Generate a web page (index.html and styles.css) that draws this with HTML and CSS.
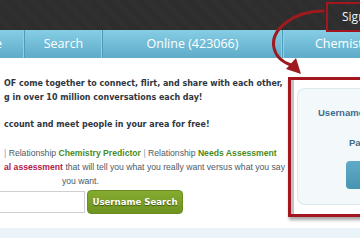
FILE: index.html
```html
<!DOCTYPE html>
<html>
<head>
<meta charset="utf-8">
<link rel="stylesheet" href="styles.css">
</head>
<body>
<div class="page">
  <header class="topbar">
    <div class="signin">Sign In</div>
  </header>
  <nav class="navbar">
    <div class="nav-item first">Home</div>
    <div class="nav-item search">Search</div>
    <div class="nav-item online">Online (423066)</div>
    <div class="nav-item chem">Chemistry</div>
  </nav>
  <main class="main">
    <section class="intro">
      <p class="lead l1">OF come together to connect, flirt, and share with each other,</p>
      <p class="lead l2">g in over 10 million conversations each day!</p>
      <p class="lead l3">ccount and meet people in your area for free!</p>
      <p class="info l4"><span class="pipe">|</span> Relationship <b class="green">Chemistry Predictor</b> <span class="pipe">|</span> Relationship <b class="green">Needs Assessment</b></p>
      <p class="info l5"><b class="crimson">al assessment</b> that will tell you what you really want versus what you say</p>
      <p class="info l6">you want.</p>
      <form class="search-row">
        <input class="search-input" type="text">
        <button class="search-btn" type="button">Username Search</button>
      </form>
    </section>
    <aside class="login-panel">
      <div class="frame">
        <div class="login-box">
          <div class="label user">Username</div>
          <div class="label pass">Password</div>
          <div class="login-btn"></div>
        </div>
      </div>
    </aside>
  </main>
  <footer class="strip"></footer>
  <svg class="arrow" width="360" height="238" viewBox="0 0 360 238">
    <path d="M323,11 C293,11 270,30 274,48 C276,57 282,62 291,65" fill="none" stroke="#9d1a1f" stroke-width="3" stroke-linecap="round"/>
    <polygon points="301,74 286,69 296,58" fill="#9d1a1f"/>
  </svg>
</div>
</body>
</html>
```
FILE: styles.css
```css
html, body {
  margin: 0;
  padding: 0;
}
body {
  width: 360px;
  height: 238px;
  overflow: hidden;
  background: #ffffff;
}
.page {
  position: relative;
  width: 360px;
  height: 238px;
  overflow: hidden;
}
.topbar {
  height: 30px;
  background: #2e2e2e;
  background-image: repeating-linear-gradient(45deg, #2b2b2b 0 1px, #323232 1px 2px);
  display: flex;
  justify-content: flex-end;
  align-items: flex-start;
}
.signin {
  margin-top: 2px;
  margin-right: -40px;
  width: 56px;
  height: 26px;
  border: 2px solid #a3161d;
  color: #f2f2f2;
  font-family: "Open Sans", sans-serif;
  font-size: 12px;
  line-height: 26px;
  padding-left: 14px;
  box-sizing: content-box;
  white-space: nowrap;
  overflow: hidden;
}
.navbar {
  height: 28px;
  display: flex;
  background: linear-gradient(#86cde4, #5eacca);
  font-family: "Open Sans", sans-serif;
  font-size: 12.5px;
  color: #ffffff;
}
.nav-item {
  height: 28px;
  line-height: 28px;
  border-right: 1px solid #4f9bb9;
  box-shadow: inset -1px 0 0 #8fd0e6;
  box-sizing: border-box;
  white-space: nowrap;
  overflow: hidden;
  flex: none;
}
.nav-item.first {
  width: 25px;
  display: flex;
  justify-content: flex-end;
  padding-right: 22px;
}
.nav-item.search {
  width: 78px;
  text-align: center;
}
.nav-item.online {
  width: 180px;
  text-align: center;
}
.nav-item.chem {
  width: 120px;
  padding-left: 32px;
  border-right: none;
  box-shadow: inset 1px 0 0 #8fd0e6;
}
.main {
  height: 170px;
  display: flex;
}
.intro {
  width: 283px;
  flex: none;
  padding-top: 18px;
  padding-left: 4px;
  box-sizing: border-box;
}
.intro p {
  margin: 0;
  white-space: nowrap;
}
.lead {
  font-family: "DejaVu Sans Condensed", "DejaVu Sans", sans-serif;
  font-weight: bold;
  font-size: 8.85px;
  line-height: 14px;
  color: #2f3640;
}
.l3 {
  margin-top: 13px !important;
}
.info {
  font-family: "Liberation Sans", Arial, sans-serif;
  font-size: 8.65px;
  line-height: 14px;
  color: #4e5a66;
}
.l4 {
  margin-top: 15px !important;
}
.l6 {
  padding-left: 58px;
}
.pipe {
  color: #7aa6c0;
}
.green {
  color: #4a8c1c;
}
.crimson {
  color: #b3204b;
}
.search-row {
  margin: 2px 0 0 -4px;
  display: flex;
  align-items: center;
  gap: 2px;
}
.search-input {
  width: 85px;
  height: 22px;
  box-sizing: border-box;
  border: 1px solid #cfcfcf;
  border-left: none;
  background: #fff;
  margin: 0;
  padding: 0;
}
.search-btn {
  width: 96px;
  height: 24px;
  border: 1px solid #6a8c20;
  border-radius: 4px;
  background: linear-gradient(#86ab30, #6e931f);
  color: #ffffff;
  font-family: "DejaVu Sans", sans-serif;
  font-weight: bold;
  font-size: 8.6px;
  text-shadow: 0 1px 1px #3d5210;
  padding: 0;
  margin: 0;
}
.login-panel {
  margin-left: 5px;
  margin-top: 19px;
  width: 120px;
  height: 140px;
  flex: none;
  border: 3px solid #a3161d;
  box-sizing: border-box;
  box-shadow: 1px 3px 3px rgba(0,0,0,0.35);
  background: #fff;
}
.frame {
  height: 100%;
  border-left: 3px solid #c4c4c4;
  padding: 8px 0 0 3px;
  box-sizing: border-box;
}
.login-box {
  height: 117px;
  border: 1px solid #dce9ef;
  border-right: none;
  border-radius: 8px 0 0 8px;
  background: #f3f9fb;
  padding-left: 20px;
  padding-top: 18px;
  box-sizing: border-box;
  font-family: "Liberation Sans", Arial, sans-serif;
  font-weight: bold;
  font-size: 9.5px;
  color: #3e6b8c;
}
.label {
  line-height: 12px;
  white-space: nowrap;
}
.label.pass {
  margin-top: 18px;
  padding-left: 31px;
}
.login-btn {
  margin-top: 12px;
  margin-left: 28px;
  height: 28px;
  border-radius: 4px 0 0 4px;
  background: linear-gradient(#60acc8, #4893b1);
}
.strip {
  height: 10px;
  background: #eaf4f8;
}
.arrow {
  position: absolute;
  left: 0;
  top: 0;
  pointer-events: none;
}
```
